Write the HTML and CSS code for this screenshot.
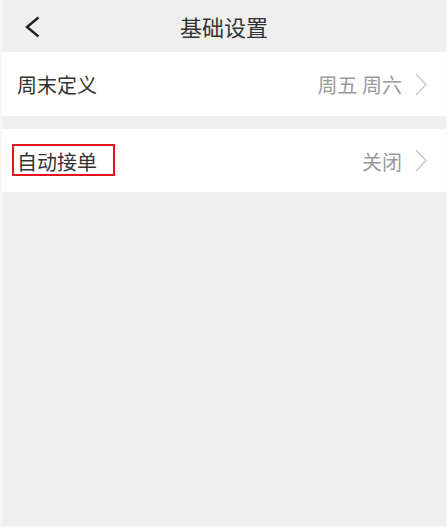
FILE: index.html
```html
<!DOCTYPE html>
<html lang="zh-CN">
<head>
<meta charset="utf-8">
<title>基础设置</title>
<link rel="stylesheet" href="styles.css">
</head>
<body>
<div class="page">
  <header class="topbar">
    <div class="back">
      <svg width="16" height="22" viewBox="0 0 16 22"><polyline points="14.5,1.5 3,11 14.5,20.5" fill="none" stroke="#222" stroke-width="2.4" stroke-linecap="butt" stroke-linejoin="miter"/></svg>
    </div>
    <h1 class="title">基础设置</h1>
    <div></div>
  </header>
  <div class="group">
    <div class="row">
      <span class="label">周末定义</span>
      <span class="value">周五 周六</span>
      <svg class="arrow" width="12" height="23" viewBox="0 0 12 23"><polyline points="1,1 11,11.5 1,22" fill="none" stroke="#c9c9c9" stroke-width="1.5"/></svg>
    </div>
  </div>
  <div class="group">
    <div class="row">
      <span class="label marked">自动接单<span class="mark"></span></span>
      <span class="value">关闭</span>
      <svg class="arrow" width="12" height="23" viewBox="0 0 12 23"><polyline points="1,1 11,11.5 1,22" fill="none" stroke="#c9c9c9" stroke-width="1.5"/></svg>
    </div>
  </div>
</div>
</body>
</html>
```
FILE: styles.css
```css
html, body {
  margin: 0;
  padding: 0;
  background: #f6f6f6;
}
body {
  font-family: "Noto Sans CJK SC", "Noto Sans", sans-serif;
}
.page {
  margin-left: 2px;
  width: 444px;
  height: 526px;
  background: #efefef;
  display: flex;
  flex-direction: column;
}
.topbar {
  height: 52px;
  display: grid;
  grid-template-columns: 1fr auto 1fr;
  align-items: center;
}
.back {
  padding-left: 22px;
  display: flex;
  align-items: center;
  height: 22px;
  margin-top: 1px;
}
.title {
  margin: 0;
  font-size: 22px;
  font-weight: normal;
  color: #333;
  line-height: 22px;
  margin-top: -1px;
}
.group {
  background: #fff;
}
.group + .group {
  margin-top: 13px;
}
.row {
  height: 64px;
  display: flex;
  align-items: center;
  padding-left: 15px;
  padding-right: 19px;
}
.group + .group .row {
  height: 63px;
}
.label {
  font-size: 20px;
  line-height: 20px;
  color: #333;
  flex: 1;
  margin-top: 2px;
}
.marked {
  position: relative;
  flex: 0 0 auto;
  margin-right: auto;
}
.mark {
  position: absolute;
  left: -5px;
  right: -18px;
  top: -8px;
  bottom: -4px;
  border: 2px solid #e5141b;
}
.value {
  font-size: 20px;
  line-height: 20px;
  color: #9a9a9a;
  margin-right: 13px;
  margin-top: 2px;
}
.arrow {
  display: block;
}
```
